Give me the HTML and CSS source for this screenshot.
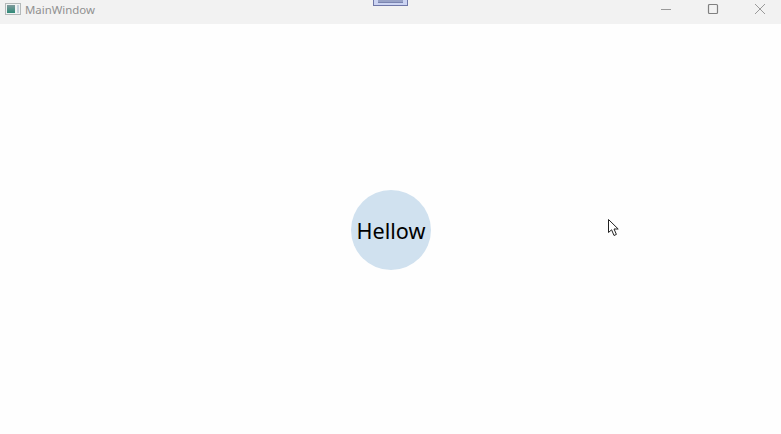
FILE: index.html
```html
<!DOCTYPE html>
<html lang="en">
<head>
    <meta charset="UTF-8">
    <meta name="viewport" content="width=device-width, initial-scale=1.0">
    <title>MainWindow</title>
    <link rel="stylesheet" href="styles.css">
</head>
<body>
    <div class="window">
        <div class="title-bar">
            <div class="title-left">
                <svg class="app-icon" width="16" height="14" viewBox="0 0 16 14">
                    <defs>
                        <linearGradient id="iconFill" x1="0" y1="0" x2="0" y2="1">
                            <stop offset="0" stop-color="#7f9a9c"/>
                            <stop offset="1" stop-color="#2f8a78"/>
                        </linearGradient>
                    </defs>
                    <rect x="0.5" y="2.5" width="15" height="11" fill="#f0f3f3" stroke="#b4b9b9"/>
                    <rect x="2" y="4" width="8" height="8" fill="url(#iconFill)"/>
                    <rect x="12" y="4" width="2" height="8" fill="#c6d2dc"/>
                </svg>
                <span class="title-text">MainWindow</span>
            </div>
            <div class="window-buttons">
                <button class="win-btn" type="button" aria-label="Minimize">
                    <svg width="12" height="12" viewBox="0 0 12 12"><path d="M1 6.5H11" stroke="#9a9a9a" fill="none"/></svg>
                </button>
                <button class="win-btn" type="button" aria-label="Maximize">
                    <svg width="12" height="12" viewBox="0 0 12 12"><rect x="1.5" y="1.5" width="9" height="9" rx="1" stroke="#808080" stroke-width="1.2" fill="none"/></svg>
                </button>
                <button class="win-btn" type="button" aria-label="Close">
                    <svg width="12" height="12" viewBox="0 0 12 12"><path d="M1 1L11 11M11 1L1 11" stroke="#9a9a9a" fill="none"/></svg>
                </button>
            </div>
        </div>
        <div class="content">
            <div class="circle">Hellow</div>
        </div>

        <!-- designer adorner poking in at the top -->
        <div class="top-tab"><div class="top-tab-line"></div></div>

        <svg class="cursor" width="12" height="18" viewBox="0 0 12 18">
            <path d="M0.5 0.5V13.5L3.6 10.8L6 16.5L8.4 15.4L6 10H10.2Z" fill="#fff" stroke="#222" stroke-width="1"/>
        </svg>
    </div>
</body>
</html>
```

FILE: styles.css
```css
html, body {
    margin: 0;
    padding: 0;
    background: #fff;
}

.window {
    position: relative;
    width: 781px;
    height: 434px;
    overflow: hidden;
    display: flex;
    flex-direction: column;
    background: #fefefe;
    font-family: 'Noto Sans', 'Open Sans', sans-serif;
}

.title-bar {
    height: 24px;
    flex: none;
    display: flex;
    justify-content: space-between;
    background: #f2f2f2;
}

.title-left {
    display: flex;
    align-items: flex-start;
    gap: 4px;
    padding: 1px 0 0 5px;
}

.title-text {
    font-size: 11.4px;
    line-height: 16px;
    padding-top: 1px;
    color: #909090;
}

.app-icon {
    display: block;
}

.window-buttons {
    display: flex;
    margin-right: -2px;
}

.win-btn {
    width: 47px;
    height: 18px;
    padding: 0;
    border: none;
    background: none;
    display: flex;
    justify-content: center;
    align-items: center;
}

.content {
    flex: 1;
    display: flex;
    justify-content: center;
    align-items: center;
    padding: 2px 0 0 1px;
}

.circle {
    width: 80px;
    height: 80px;
    border-radius: 50%;
    background: #d0e1ef;
    color: #000;
    font-size: 21.6px;
    display: flex;
    justify-content: center;
    align-items: center;
}

.top-tab {
    position: absolute;
    left: 373px;
    top: -1px;
    width: 33px;
    height: 5px;
    border: 1px solid #7078a8;
    background: #ccd4f2;
}

.top-tab-line {
    height: 2px;
    margin: 0 4px;
    background: #98a2c6;
    border-bottom: 1px solid #7a84b0;
}

.cursor {
    position: absolute;
    left: 608px;
    top: 219px;
}
```
